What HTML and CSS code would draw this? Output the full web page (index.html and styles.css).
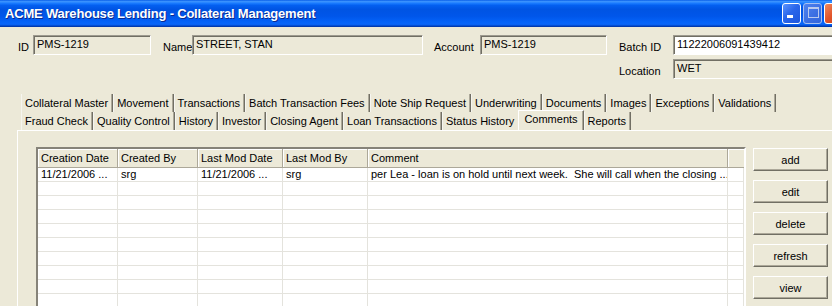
FILE: index.html
```html
<!DOCTYPE html>
<html lang="en">
<head>
    <meta charset="UTF-8">
    <title>ACME Warehouse Lending - Collateral Management</title>
    <link rel="stylesheet" href="styles.css">
</head>
<body>
    <div class="titlebar">
        <span class="title">ACME Warehouse Lending - Collateral Management</span>
        <div class="controls">
            <div class="ctl">
                <svg width="17" height="19" viewBox="0 0 17 19"><rect x="4" y="11" width="6" height="3" fill="#fff"/></svg>
            </div>
            <div class="ctl ctl-off">
                <svg width="17" height="19" viewBox="0 0 17 19"><rect x="4.5" y="3.5" width="10" height="10" fill="none" stroke="#b8c9ef"/><rect x="4" y="3" width="11" height="2" fill="#b8c9ef"/></svg>
            </div>
            <div class="ctl ctl-close"></div>
        </div>
    </div>

    <!-- 顶部的基本信息 -->
    <div class="header">
        <div class="field f-id">
            <span class="label">ID</span>
            <div class="box w-id">PMS-1219</div>
        </div>
        <div class="field f-name">
            <span class="label">Name</span>
            <div class="box w-name">STREET, STAN</div>
        </div>
        <div class="field f-account">
            <span class="label">Account</span>
            <div class="box w-account">PMS-1219</div>
        </div>
        <div class="batch">
            <div class="field">
                <span class="label wide">Batch ID</span>
                <div class="box w-batch white">11222006091439412</div>
            </div>
            <div class="field">
                <span class="label wide">Location</span>
                <div class="box w-batch">WET</div>
            </div>
        </div>
    </div>

    <div class="tabs">
        <div class="tabrow">
            <span class="tab">Collateral Master</span>
            <span class="tab">Movement</span>
            <span class="tab">Transactions</span>
            <span class="tab">Batch Transaction Fees</span>
            <span class="tab">Note Ship Request</span>
            <span class="tab">Underwriting</span>
            <span class="tab">Documents</span>
            <span class="tab">Images</span>
            <span class="tab">Exceptions</span>
            <span class="tab">Validations</span>
        </div>
        <div class="tabrow">
            <span class="tab">Fraud Check</span>
            <span class="tab">Quality Control</span>
            <span class="tab">History</span>
            <span class="tab">Investor</span>
            <span class="tab">Closing Agent</span>
            <span class="tab">Loan Transactions</span>
            <span class="tab no-line">Status History</span>
            <span class="tab active">Comments</span>
            <span class="tab">Reports</span>
        </div>
    </div>

    <div class="panel">
        <div class="grid">
            <table>
                <colgroup>
                    <col class="c1"><col class="c2"><col class="c3"><col class="c4"><col class="c5"><col>
                </colgroup>
                <thead>
                    <tr>
                        <th>Creation Date</th>
                        <th>Created By</th>
                        <th>Last Mod Date</th>
                        <th>Last Mod By</th>
                        <th>Comment</th>
                        <th class="blank"></th>
                    </tr>
                </thead>
                <tbody>
                    <tr>
                        <td>11/21/2006 ...</td>
                        <td>srg</td>
                        <td>11/21/2006 ...</td>
                        <td>srg</td>
                        <td>per Lea - loan is on hold until next week.&nbsp; She will call when the closing ...</td>
                        <td></td>
                    </tr>
                    <tr><td></td><td></td><td></td><td></td><td></td><td></td></tr>
                    <tr><td></td><td></td><td></td><td></td><td></td><td></td></tr>
                    <tr><td></td><td></td><td></td><td></td><td></td><td></td></tr>
                    <tr><td></td><td></td><td></td><td></td><td></td><td></td></tr>
                    <tr><td></td><td></td><td></td><td></td><td></td><td></td></tr>
                    <tr><td></td><td></td><td></td><td></td><td></td><td></td></tr>
                    <tr><td></td><td></td><td></td><td></td><td></td><td></td></tr>
                    <tr><td></td><td></td><td></td><td></td><td></td><td></td></tr>
                    <tr><td></td><td></td><td></td><td></td><td></td><td></td></tr>
                </tbody>
            </table>
        </div>
        <div class="actions">
            <button>add</button>
            <button>edit</button>
            <button>delete</button>
            <button>refresh</button>
            <button>view</button>
        </div>
    </div>
</body>
</html>
```

FILE: styles.css
```css
* {
    margin: 0;
    padding: 0;
    box-sizing: border-box;
}

body {
    width: 832px;
    height: 306px;
    overflow: hidden;
    background: #ece9d8;
    font-family: "Liberation Sans", Arial, sans-serif;
    font-size: 11px;
    color: #000;
}

/* 标题栏 */
.titlebar {
    display: flex;
    justify-content: space-between;
    align-items: center;
    height: 27px;
    background: linear-gradient(to bottom, #0a5fe8 0%, #3d95ff 6%, #1a7bff 12%, #035ff0 20%, #0054e3 35%, #0056ea 60%, #0462f7 80%, #0a66f8 90%, #0247c8 96%, #01309a 100%);
}

.title {
    padding-left: 5px;
    color: #fff;
    font-weight: bold;
    font-size: 13px;
    letter-spacing: -0.2px;
    text-shadow: 1px 1px 0 #0b2a8f;
}

.controls {
    display: flex;
    gap: 2px;
    margin-right: -11px;
}

.ctl {
    width: 19px;
    height: 21px;
    border: 1px solid #fff;
    border-radius: 3px;
    background: linear-gradient(135deg, #5b94ff 0%, #2a66ea 45%, #1d56dd 100%);
}

.ctl svg {
    display: block;
}

.ctl-off {
    border-color: #a8c0f0;
    background: linear-gradient(135deg, #4f82ee 0%, #3b6ee2 60%, #3366dc 100%);
}

.ctl-close {
    background: linear-gradient(135deg, #f08a5d 0%, #e2542a 50%, #c8401c 100%);
}

/* 顶部字段 */
.header {
    display: flex;
    align-items: flex-start;
    padding: 8px 0 0 18px;
}

.field {
    display: flex;
    align-items: flex-end;
}

.label {
    line-height: 13px;
    padding-bottom: 1px;
}

.f-id .label {
    width: 15px;
}

.f-name {
    margin-left: 12px;
}

.f-name .label {
    width: 29px;
}

.f-account {
    margin-left: 11px;
}

.f-account .label {
    width: 46px;
}

.label.wide {
    width: 54px;
}

.batch {
    display: flex;
    flex-direction: column;
    gap: 4px;
    margin-left: 12px;
}

.box {
    height: 20px;
    padding: 2px 0 0 3px;
    border: 1px solid;
    border-color: #9d9a8f #fff #fff #9d9a8f;
    box-shadow: inset 1px 1px 0 #716f64;
    background: #ece9d8;
    white-space: nowrap;
    overflow: hidden;
}

.box.white {
    background: #fff;
}

.w-id {
    width: 118px;
}

.w-name {
    width: 231px;
}

.w-account {
    width: 127px;
}

.w-batch {
    width: 170px;
}

/* 选项卡 */
.tabs {
    margin: 15px 0 0 21px;
}

.tabrow {
    display: flex;
    height: 18px;
}

.tab {
    height: 18px;
    line-height: 16px;
    padding: 1px 4px 0 3px;
    border-left: 1px solid #f6f5ef;
    border-right: 1px solid #716f64;
    box-shadow: inset -1px 0 0 #aca899;
    white-space: nowrap;
}

.tab.no-line {
    border-right: none;
    box-shadow: none;
}

.tab.active {
    position: relative;
    z-index: 1;
    height: 20px;
    margin-top: -2px;
    margin-bottom: -1px;
    padding: 0 5px 0 5px;
    background: #ece9d8;
    border-left: 1px solid #fff;
    border-top: 1px solid #fff;
}

/* 内容面板 */
.panel {
    display: flex;
    align-items: flex-start;
    gap: 7px;
    height: 176px;
    overflow: hidden;
    margin-left: 17px;
    padding: 16px 0 0 18px;
    border-top: 1px solid #fff;
    border-left: 1px solid #fff;
}

.grid {
    width: 710px;
    height: 170px;
    overflow: hidden;
    background: #fff;
    border: 2px solid;
    border-color: #868379 #fff #fff #868379;
}

.grid table {
    width: 706px;
    table-layout: fixed;
    border-collapse: separate;
    border-spacing: 0;
}

.c1, .c2 {
    width: 80px;
}

.c3, .c4 {
    width: 85px;
}

.c5 {
    width: 360px;
}

.grid th {
    height: 19px;
    padding-left: 3px;
    text-align: left;
    font-weight: normal;
    background: #ece9d8;
    border-right: 1px solid #aca899;
    border-bottom: 1px solid #aca899;
    box-shadow: inset 1px 1px 0 #fff;
    white-space: nowrap;
    overflow: hidden;
}

.grid th.blank {
    border-right: none;
}

.grid td {
    height: 14px;
    line-height: 13px;
    padding-left: 3px;
    border-right: 1px solid #e4e3dd;
    border-bottom: 1px solid #e4e3dd;
    white-space: nowrap;
    overflow: hidden;
}

.actions {
    display: flex;
    flex-direction: column;
    gap: 9px;
    padding-top: 1px;
}

.actions button {
    width: 75px;
    height: 23px;
    font: inherit;
    color: #000;
    background: #ece9d8;
    border: 1px solid;
    border-color: #fff #716f64 #716f64 #fff;
    box-shadow: inset -1px -1px 0 #aca899;
}
```
